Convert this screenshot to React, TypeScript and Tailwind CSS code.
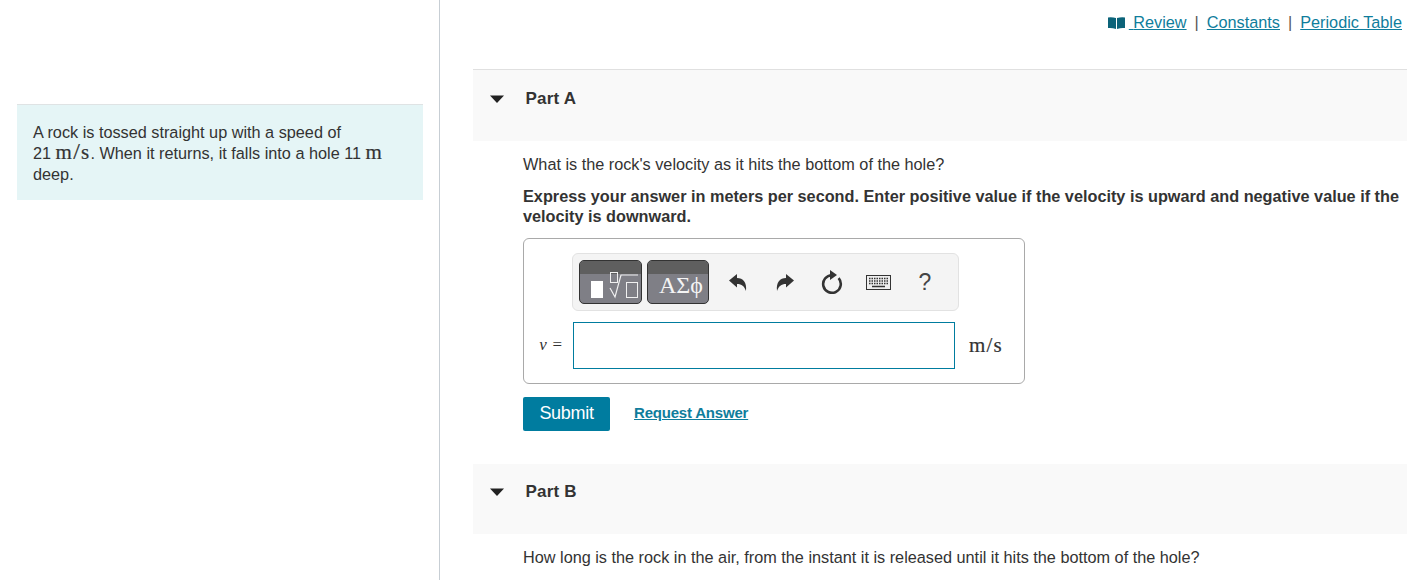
import React from "react";

const math = "font-['Liberation_Serif',serif] text-[21px] leading-[0] tracking-[1.2px] [-webkit-text-stroke:0.2px_#333]";

function Header({ label, className }: { label: string; className: string }) {
  return (
    <div className={`flex items-center bg-[#f9f9f9] ${className}`}>
      <svg width="14" height="8" viewBox="0 0 14 8" className="ml-[17px] mr-[21px]">
        <path d="M0 0.5 H14 L7 8 Z" fill="#222" />
      </svg>
      <span className="pl-[0.5px] text-[17px] font-bold tracking-[0.2px] text-[#333]">{label}</span>
    </div>
  );
}

function ToolIcon({ children }: { children: React.ReactNode }) {
  return <div className="flex w-[47px] justify-center">{children}</div>;
}

export default function App() {
  return (
    <div className="flex h-[580px] w-[1407px] overflow-hidden bg-white font-['Liberation_Sans',Arial,sans-serif] text-[16.25px] text-[#333]">
      <div className="h-full w-[440px] shrink-0 border-r border-[#c7ced4] pl-[17px] pr-4 pt-[104px]">
        <div className="h-[96px] border-t border-[#dfe3e4] bg-[#e5f5f6] px-4 pt-[17px] leading-[21px]">
          A rock is tossed straight up with a speed of
          <br />
          21 <span className={math}>m<span className="text-[24px]">/</span>s</span>. When it returns, it falls into a hole 11{" "}
          <span className={math}>m</span>
          <br />
          deep.
        </div>
      </div>

      <div className="flex-1 pl-[33px]">
        <div className="flex h-[69px] items-start justify-end whitespace-nowrap pr-[5px] pt-[12px] leading-[21px]">
          <a className="flex h-[21px] items-center text-[#0f7d9c]">
            <svg width="17" height="12" viewBox="0 0 17 12">
              <path d="M0 0.5 Q4 0 8 1 V12 Q4 10.5 0 11 Z M9 1 Q13 0 17 0.5 V11 Q13 10.5 9 12 Z" fill="#0b6379" />
            </svg>
            <span className="ml-[4px] underline">
              {"\u00a0"}Review
            </span>
          </a>
          <span className="mx-2 text-[#555]">|</span>
          <a className="text-[#0f7d9c] underline">Constants</a>
          <span className="mx-2 text-[#555]">|</span>
          <a className="text-[#0f7d9c] underline">Periodic Table</a>
        </div>

        <Header label="Part A" className="h-[72px] border-t border-[#e0e0e0] pb-[14px]" />

        <div className="pl-[50px]">
          <p className="mt-[13px] leading-[21px]">What is the rock's velocity as it hits the bottom of the hole?</p>
          <p className="mt-[11px] font-bold leading-[20px]">
            Express your answer in meters per second. Enter positive value if the velocity is upward and negative value if the velocity is downward.
          </p>

          <div className="mt-[12px] h-[146px] w-[502px] rounded-[6px] border border-[#a9a9a9] pt-[14px]">
            <div className="ml-[48px] flex h-[58px] w-[387px] items-center rounded-[6px] border border-[#e2e2e2] bg-[#f4f4f4] pl-[6px]">
              <div className="relative h-[44px] w-[63px] overflow-hidden rounded-[5px] border border-[#333] bg-[#7f7f86]">
                <div className="absolute inset-x-0 top-0 h-[13px] bg-[#5f5f5f]" />
                <svg width="61" height="42" viewBox="0 0 61 42" className="absolute left-0 top-0">
                  <rect x="11" y="20" width="12" height="17" fill="#fff" />
                  <rect x="30.5" y="11.5" width="7" height="10" fill="none" stroke="#f0f0f0" />
                  <path d="M30 27 L35 36 L41 14 H58" fill="none" stroke="#f0f0f0" strokeWidth="1.2" />
                  <rect x="46.5" y="21.5" width="11" height="15" fill="none" stroke="#f0f0f0" />
                </svg>
              </div>
              <div className="relative ml-[5px] flex h-[44px] w-[62px] items-end justify-center overflow-hidden rounded-[5px] border border-[#333] bg-[#7f7f86] pl-[6px]">
                <div className="absolute inset-x-0 top-0 h-[13px] bg-[#5f5f5f]" />
                <span className="relative pb-[5px] font-['Liberation_Serif',serif] text-[24px] leading-[26px] text-[#f4f4f4]">ΑΣϕ</span>
              </div>
              <div className="ml-[5px] flex items-center">
                <ToolIcon>
                  <svg width="18" height="19" viewBox="0 0 18 19">
                    <path d="M0 7.5 L8 1 V5 C14 5 18 9 17 18 C15 13 13 11 8 11 V14.5 Z" fill="#333" />
                  </svg>
                </ToolIcon>
                <ToolIcon>
                  <svg width="18" height="19" viewBox="0 0 18 19">
                    <path d="M18 7.5 L10 1 V5 C4 5 0 9 1 18 C3 13 5 11 10 11 V14.5 Z" fill="#333" />
                  </svg>
                </ToolIcon>
                <ToolIcon>
                  <svg width="22" height="24" viewBox="0 0 22 24">
                    <path d="M11 5.2 A8.8 8.8 0 1 0 17.6 8.2" fill="none" stroke="#333" strokeWidth="2.6" />
                    <path d="M9 0 L16 5 L9 10 Z" fill="#333" />
                  </svg>
                </ToolIcon>
                <ToolIcon>
                  <svg width="25" height="15" viewBox="0 0 25 15">
                    <rect x="0.5" y="0.5" width="24" height="14" fill="#eee" stroke="#333" />
                    <path d="M3 3.5 H22 M3 6 H22 M3 8.5 H22" stroke="#333" strokeWidth="1.3" strokeDasharray="1.5 1" />
                    <path d="M6 11.5 H19" stroke="#333" strokeWidth="1.5" />
                  </svg>
                </ToolIcon>
                <div className="ml-[3px] flex w-[40px] justify-center text-[23px] leading-none text-[#444]">?</div>
              </div>
            </div>

            <div className="mt-[11px] flex items-center">
              <div className="w-[49px] pb-[2px] pr-[10px] text-right font-['Liberation_Serif',serif] text-[17px] tracking-[0.8px] text-[#333]">
                <i>v</i> =
              </div>
              <div className="h-[47px] w-[382px] border border-[#007c9f] bg-white" />
              <div className={`ml-[14px] pb-[2px] ${math}`}>m/s</div>
            </div>
          </div>

          <div className="mt-[13px] flex items-center">
            <button className="h-[34px] w-[87px] rounded-[2px] bg-[#007c9f] pb-[2px] text-[18px] tracking-[-0.3px] text-white">Submit</button>
            <a className="ml-[24px] pb-[2px] text-[15px] font-bold tracking-[-0.2px] text-[#0f7d9c] underline">Request Answer</a>
          </div>
        </div>

        <Header label="Part B" className="mt-[33px] h-[70px] pb-[14px]" />

        <p className="mt-[13px] pl-[50px] leading-[21px]">
          How long is the rock in the air, from the instant it is released until it hits the bottom of the hole?
        </p>
      </div>
    </div>
  );
}
